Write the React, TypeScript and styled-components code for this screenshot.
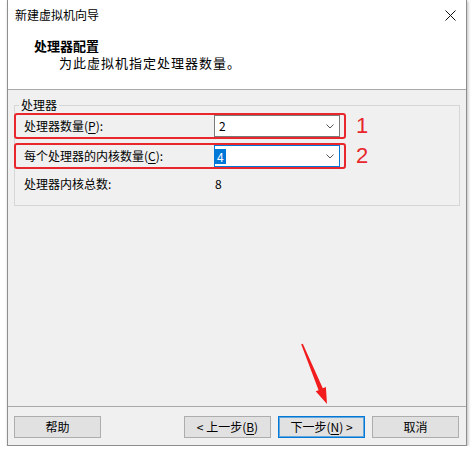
import React from 'react';
import styled, { createGlobalStyle } from 'styled-components';

const GlobalStyle = createGlobalStyle`
  html, body { margin: 0; padding: 0; background: #ffffff; }
  body {
    font-family: "Noto Sans CJK SC", "Noto Sans", sans-serif;
    font-size: 12px;
    color: #000;
  }
`;

const Window = styled.div`
  position: relative;
  margin-left: 7px;
  width: 460px;
  height: 446px;
  box-sizing: border-box;
  border: 1px solid #8e8e8e;
  border-top: none;
  box-shadow: 1px 1px 3px rgba(0, 0, 0, 0.28);
  background: #f0f0f0;
  display: flex;
  flex-direction: column;
`;

const Header = styled.div`
  height: 90px;
  box-sizing: border-box;
  background: #ffffff;
  border-bottom: 1px solid #a9a9a9;
`;

const TitleBar = styled.div`
  height: 30px;
  display: flex;
  align-items: center;
  justify-content: space-between;
  padding: 0 10px 0 7px;
  font-size: 12px;
  line-height: 16px;
`;

const CloseIcon = styled.svg`
  display: block;
  width: 11px;
  height: 11px;
`;

const PageTitle = styled.div`
  margin-top: 8px;
  padding-left: 26px;
  font-size: 13px;
  font-weight: 700;
  line-height: 16px;
`;

const PageSubtitle = styled.div`
  padding-left: 51px;
  margin-top: 1px;
  font-size: 13px;
  letter-spacing: 1px;
  line-height: 16px;
`;

const Body = styled.div`
  flex: 1;
  padding: 7px 6px 0 6px;
`;

const Group = styled.fieldset`
  margin: 0;
  padding: 0 0 13px 0;
  min-width: 0;
  border: 1px solid #d6d6d6;
`;

const GroupLegend = styled.legend`
  margin-left: 4px;
  padding: 0 2px;
  font-size: 12px;
  line-height: 16px;
`;

const MarkedRow = styled.div<{ $gap?: number }>`
  display: flex;
  align-items: center;
  margin-top: ${(p) => p.$gap ?? 0}px;
`;

const RedBox = styled.div`
  width: 332px;
  height: 26px;
  box-sizing: border-box;
  margin-left: -1px;
  padding: 0 4px 0 8px;
  border: 2px solid #e8262b;
  border-radius: 3px;
  display: flex;
  align-items: center;
  justify-content: space-between;
`;

const Label = styled.span`
  font-size: 12px;
  line-height: 16px;
`;

const Mnemonic = styled.span`
  text-decoration: underline;
  text-underline-offset: 2px;
`;

const Marker = styled.span`
  margin-left: 10px;
  font-family: "Liberation Sans", Arial, sans-serif;
  font-size: 22px;
  line-height: 1;
  color: #e8262b;
`;

const Combo = styled.div<{ $focused?: boolean }>`
  width: 126px;
  height: 22px;
  box-sizing: border-box;
  border: 1px solid ${(p) => (p.$focused ? '#0078d7' : '#7a7a7a')};
  background: #ffffff;
  display: flex;
  align-items: center;
  justify-content: space-between;
  padding: 0 5px 0 4px;
  font-size: 12px;
  line-height: 16px;
`;

const Selected = styled.span`
  margin-left: -4px;
  padding: 0 2px;
  background: #0078d7;
  color: #ffffff;
  line-height: 15px;
`;

const Chevron = styled.svg`
  display: block;
  width: 8px;
  height: 5px;
`;

const TotalRow = styled.div`
  display: flex;
  margin-top: 7px;
  padding-left: 9px;
  line-height: 16px;
  font-size: 12px;
`;

const TotalLabel = styled.span`
  width: 191px;
`;

const Footer = styled.div`
  height: 39px;
  box-sizing: border-box;
  border-top: 1px solid #a9a9a9;
  padding: 9px 7px 0 6px;
  display: flex;
  align-items: flex-start;
`;

const Spacer = styled.div`
  flex: 1;
`;

const ButtonGroup = styled.div`
  display: flex;
  gap: 7px;
`;

const Button = styled.button<{ $default?: boolean }>`
  width: 87px;
  height: 22px;
  box-sizing: border-box;
  margin: 0;
  padding: 0;
  background: #e1e1e1;
  border: 1px solid ${(p) => (p.$default ? '#0078d7' : '#adadad')};
  box-shadow: ${(p) => (p.$default ? 'inset 0 0 0 1px rgba(0,120,215,0.55)' : 'none')};
  font-family: "Noto Sans CJK SC", "Noto Sans", sans-serif;
  font-size: 12px;
  line-height: 16px;
  color: #000;
`;

const Arrow = styled.svg`
  position: absolute;
  left: 287px;
  top: 340px;
  width: 40px;
  height: 70px;
  pointer-events: none;
`;

const ChevronDown = () => (
  <Chevron viewBox="0 0 8 5">
    <path d="M0.5 0.5 L4 4 L7.5 0.5" fill="none" stroke="#555" strokeWidth="1" />
  </Chevron>
);

export default function App() {
  return (
    <>
      <GlobalStyle />
      <Window>
        <Header>
          <TitleBar>
            <span>新建虚拟机向导</span>
            <CloseIcon viewBox="0 0 11 11">
              <path d="M0.5 0.5 L10.5 10.5 M10.5 0.5 L0.5 10.5" stroke="#111" strokeWidth="1" />
            </CloseIcon>
          </TitleBar>
          <PageTitle>处理器配置</PageTitle>
          <PageSubtitle>为此虚拟机指定处理器数量。</PageSubtitle>
        </Header>
        <Body>
          <Group>
            <GroupLegend>处理器</GroupLegend>
            <MarkedRow>
              <RedBox>
                <Label>
                  处理器数量(<Mnemonic>P</Mnemonic>):
                </Label>
                <Combo>
                  <span>2</span>
                  <ChevronDown />
                </Combo>
              </RedBox>
              <Marker>1</Marker>
            </MarkedRow>
            <MarkedRow $gap={4}>
              <RedBox>
                <Label>
                  每个处理器的内核数量(<Mnemonic>C</Mnemonic>):
                </Label>
                <Combo $focused>
                  <Selected>4</Selected>
                  <ChevronDown />
                </Combo>
              </RedBox>
              <Marker>2</Marker>
            </MarkedRow>
            <TotalRow>
              <TotalLabel>处理器内核总数:</TotalLabel>
              <span>8</span>
            </TotalRow>
          </Group>
        </Body>
        <Footer>
          <Button>帮助</Button>
          <Spacer />
          <ButtonGroup>
            <Button>
              &lt; 上一步(<Mnemonic>B</Mnemonic>)
            </Button>
            <Button $default>
              下一步(<Mnemonic>N</Mnemonic>) &gt;
            </Button>
            <Button>取消</Button>
          </ButtonGroup>
        </Footer>
        <Arrow viewBox="295 340 40 70">
          <polygon
            points="302.8,343.7 301.2,344.3 318.6,390.2 315.7,391.3 327,404 325.9,387.1 322.8,388.3"
            fill="#f21c1c"
          />
        </Arrow>
      </Window>
    </>
  );
}
